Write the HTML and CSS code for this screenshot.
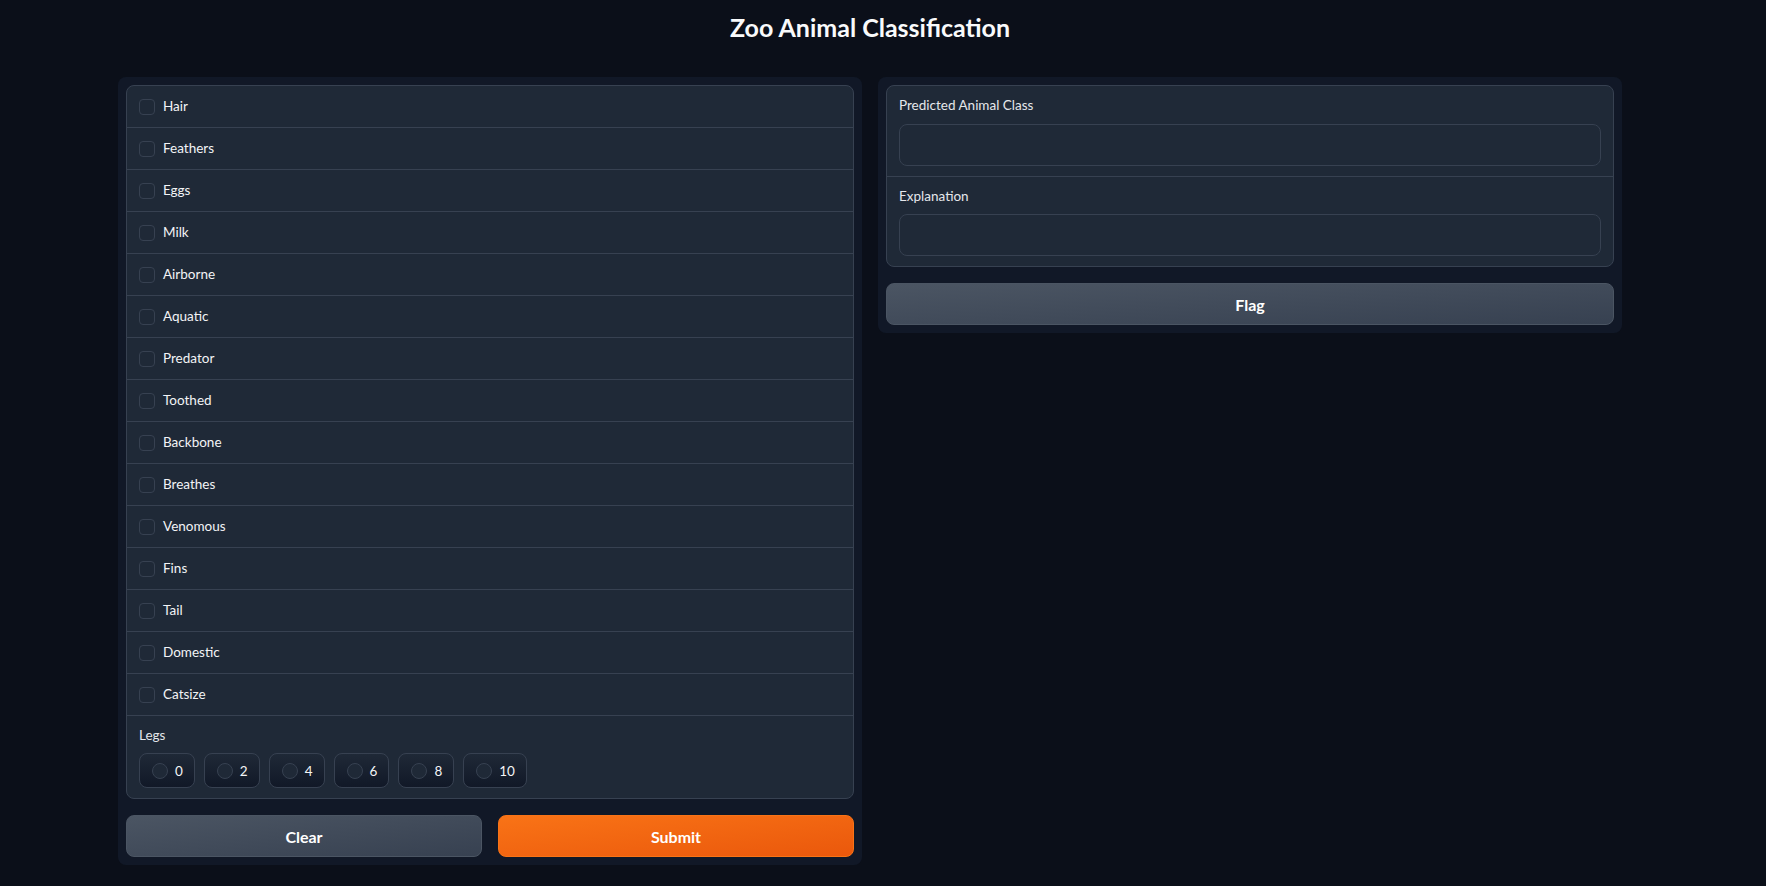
FILE: index.html
```html
<!DOCTYPE html>
<html lang="en">
<head>
<meta charset="utf-8">
<title>Zoo Animal Classification</title>
<link rel="stylesheet" href="styles.css">
</head>
<body>
<div class="app">
  <h1 class="title">Zoo Animal Classification</h1>
  <div class="columns">
    <div class="panel">
      <div class="form">
        <label class="check-row"><span class="box"></span><span class="check-label">Hair</span></label>
        <label class="check-row"><span class="box"></span><span class="check-label">Feathers</span></label>
        <label class="check-row"><span class="box"></span><span class="check-label">Eggs</span></label>
        <label class="check-row"><span class="box"></span><span class="check-label">Milk</span></label>
        <label class="check-row"><span class="box"></span><span class="check-label">Airborne</span></label>
        <label class="check-row"><span class="box"></span><span class="check-label">Aquatic</span></label>
        <label class="check-row"><span class="box"></span><span class="check-label">Predator</span></label>
        <label class="check-row"><span class="box"></span><span class="check-label">Toothed</span></label>
        <label class="check-row"><span class="box"></span><span class="check-label">Backbone</span></label>
        <label class="check-row"><span class="box"></span><span class="check-label">Breathes</span></label>
        <label class="check-row"><span class="box"></span><span class="check-label">Venomous</span></label>
        <label class="check-row"><span class="box"></span><span class="check-label">Fins</span></label>
        <label class="check-row"><span class="box"></span><span class="check-label">Tail</span></label>
        <label class="check-row"><span class="box"></span><span class="check-label">Domestic</span></label>
        <label class="check-row"><span class="box"></span><span class="check-label">Catsize</span></label>
        <div class="block">
          <div class="block-label legs-label">Legs</div>
          <div class="radio-group">
            <label class="pill"><span class="dot"></span><span>0</span></label>
            <label class="pill"><span class="dot"></span><span>2</span></label>
            <label class="pill"><span class="dot"></span><span>4</span></label>
            <label class="pill"><span class="dot"></span><span>6</span></label>
            <label class="pill"><span class="dot"></span><span>8</span></label>
            <label class="pill"><span class="dot"></span><span>10</span></label>
          </div>
        </div>
      </div>
      <div class="button-row">
        <button class="btn btn-secondary">Clear</button>
        <button class="btn btn-primary">Submit</button>
      </div>
    </div>
    <div class="panel">
      <div class="form">
        <div class="block">
          <div class="block-label">Predicted Animal Class</div>
          <div class="textbox"></div>
        </div>
        <div class="block">
          <div class="block-label">Explanation</div>
          <div class="textbox"></div>
        </div>
      </div>
      <button class="btn btn-secondary btn-full">Flag</button>
    </div>
  </div>
</div>
</body>
</html>
```

FILE: styles.css
```css
html, body {
  margin: 0;
  padding: 0;
  background: #0b0f19;
}

body {
  font-family: "Lato", "Noto Sans", sans-serif;
  color: #f3f4f6;
  font-size: 13.5px;
}

.app {
  width: 1504px;
  padding-left: 118px;
  padding-top: 12px;
}

.title {
  margin: 0;
  height: 65px;
  text-align: center;
  font-size: 25px;
  font-weight: 700;
  line-height: 31px;
  color: #f9fafb;
}

.columns {
  display: flex;
  gap: 16px;
  align-items: flex-start;
}

.panel {
  flex: 1;
  background: #111827;
  border-radius: 8px;
  padding: 8px;
  display: flex;
  flex-direction: column;
  gap: 16px;
}

.form {
  background: #1f2937;
  border: 1px solid #374151;
  border-radius: 8px;
  overflow: hidden;
  display: flex;
  flex-direction: column;
}

.form > * + * {
  border-top: 1px solid #374151;
}

.check-row {
  display: flex;
  align-items: center;
  gap: 8px;
  height: 41px;
  padding: 0 12px;
}

.box {
  width: 14px;
  height: 14px;
  border: 1px solid #374151;
  border-radius: 4px;
  background: #1f2937;
  flex: none;
}

.check-label {
  font-size: 13.5px;
  line-height: 18px;
  padding-bottom: 2px;
  color: #f3f4f6;
}

.block {
  padding: 10px 12px;
}

.block-label {
  line-height: 18px;
  padding-bottom: 2px;
  font-size: 13.5px;
  color: #e5e7eb;
  margin-bottom: 7.5px;
}

.legs-label {
  margin-bottom: 7px;
}

.radio-group {
  display: flex;
  gap: 9px;
}

.pill {
  display: flex;
  align-items: center;
  gap: 7px;
  height: 33px;
  padding: 0 11px 0 12px;
  border: 1px solid #374151;
  border-radius: 8px;
  background: linear-gradient(to top, #111827, #1f2937);
  font-size: 13.5px;
  color: #f3f4f6;
}

.dot {
  width: 14px;
  height: 14px;
  border: 1px solid #374151;
  border-radius: 50%;
  background: #1f2937;
}

.textbox {
  height: 40px;
  border: 1px solid #374151;
  border-radius: 8px;
  background: #1f2937;
}

.button-row {
  display: flex;
  gap: 16px;
}

.btn {
  flex: 1;
  height: 42px;
  border-radius: 8px;
  font-family: inherit;
  font-size: 16px;
  font-weight: 700;
  color: #ffffff;
  cursor: pointer;
}

.btn-full {
  flex: none;
}

.btn-secondary {
  background: linear-gradient(to bottom right, #4b5563, #374151);
  border: 1px solid #4b5563;
}

.btn-primary {
  background: linear-gradient(to bottom right, #f97316, #ea580c);
  border: 1px solid #f97316;
}
```
